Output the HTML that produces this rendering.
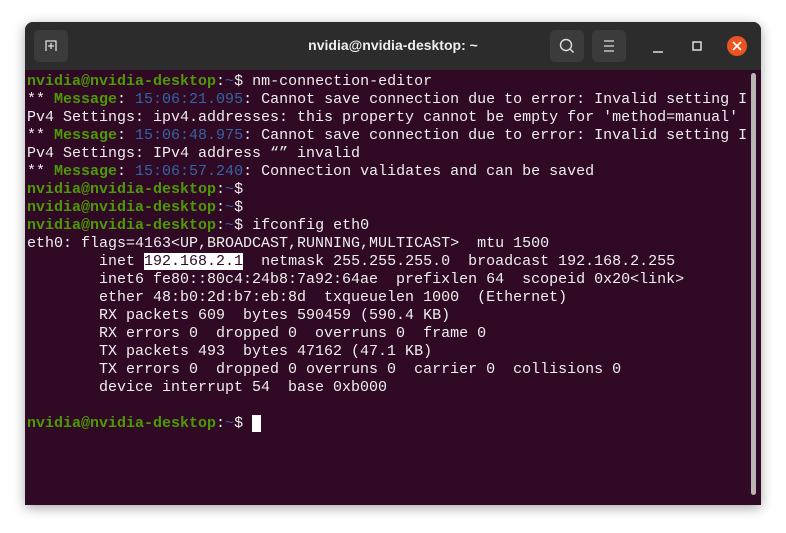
<!DOCTYPE html>
<html><head><meta charset="utf-8"><style>
body{margin:0;width:786px;height:533px;background:#fff;position:relative;overflow:hidden}
.win{position:absolute;left:25px;top:22px;width:736px;height:483px;background:#300a24;border-radius:8px 8px 0 0;box-shadow:0 3px 12px rgba(0,0,0,.35);overflow:hidden}
.tb{position:absolute;left:0;top:0;width:736px;height:48px;background:#2c2c2c}
.btn{position:absolute;top:8px;width:34px;height:32px;background:#3b3b3b;border-radius:5px}
.title{position:absolute;left:0;width:736px;top:15px;text-align:center;color:#eee;font:bold 14px "Liberation Sans",sans-serif}
pre{position:absolute;left:2px;top:51px;margin:0;font:15px/18px "Liberation Mono",monospace;color:#eee}
.g{color:#4e9a06;font-weight:bold}.b{color:#3465a4}.hl{background:#fff;color:#300a24}
.sb{position:absolute;left:726px;top:51px;width:5px;height:422px;background:#b8b6b4;border-radius:3px}
</style></head><body>
<div class="win">
<div class="tb">
<div class="btn" style="left:9px"><svg width="34" height="32"><path d="M12 21V11h10v10M14 16h6M17 13v6" stroke="#ddd" stroke-width="1.3" fill="none"/></svg></div>
<div class="title">nvidia@nvidia-desktop: ~</div>
<div class="btn" style="left:525px"><svg width="34" height="32"><circle cx="16" cy="15" r="5.5" stroke="#ddd" stroke-width="1.4" fill="none"/><path d="M20 19l3.5 3.5" stroke="#ddd" stroke-width="1.5"/></svg></div>
<div class="btn" style="left:567px"><svg width="34" height="32"><path d="M12 11h10M12 16h10M12 21h10" stroke="#ddd" stroke-width="1.2"/></svg></div>
<svg style="position:absolute;left:620px;top:14px" width="115" height="22"><path d="M8 16h10" stroke="#ddd" stroke-width="1.5"/><rect x="48" y="6" width="8" height="8" stroke="#ddd" stroke-width="1.5" fill="none"/><circle cx="92" cy="10" r="10" fill="#e95420"/><path d="M88 6l8 8M96 6l-8 8" stroke="#fff" stroke-width="1.6"/></svg>
</div>
<pre><span class="g">nvidia@nvidia-desktop</span>:<span class="b">~</span>$ nm-connection-editor
** <span class="g">Message</span>: <span class="b">15:06:21.095</span>: Cannot save connection due to error: Invalid setting I
Pv4 Settings: ipv4.addresses: this property cannot be empty for 'method=manual'
** <span class="g">Message</span>: <span class="b">15:06:48.975</span>: Cannot save connection due to error: Invalid setting I
Pv4 Settings: IPv4 address “” invalid
** <span class="g">Message</span>: <span class="b">15:06:57.240</span>: Connection validates and can be saved
<span class="g">nvidia@nvidia-desktop</span>:<span class="b">~</span>$
<span class="g">nvidia@nvidia-desktop</span>:<span class="b">~</span>$
<span class="g">nvidia@nvidia-desktop</span>:<span class="b">~</span>$ ifconfig eth0
eth0: flags=4163&lt;UP,BROADCAST,RUNNING,MULTICAST&gt;  mtu 1500
        inet <span class="hl">192.168.2.1</span>  netmask 255.255.255.0  broadcast 192.168.2.255
        inet6 fe80::80c4:24b8:7a92:64ae  prefixlen 64  scopeid 0x20&lt;link&gt;
        ether 48:b0:2d:b7:eb:8d  txqueuelen 1000  (Ethernet)
        RX packets 609  bytes 590459 (590.4 KB)
        RX errors 0  dropped 0  overruns 0  frame 0
        TX packets 493  bytes 47162 (47.1 KB)
        TX errors 0  dropped 0 overruns 0  carrier 0  collisions 0
        device interrupt 54  base 0xb000

<span class="g">nvidia@nvidia-desktop</span>:<span class="b">~</span>$ <span class="hl"> </span></pre>
<div class="sb"></div>
</div>
</body></html>
